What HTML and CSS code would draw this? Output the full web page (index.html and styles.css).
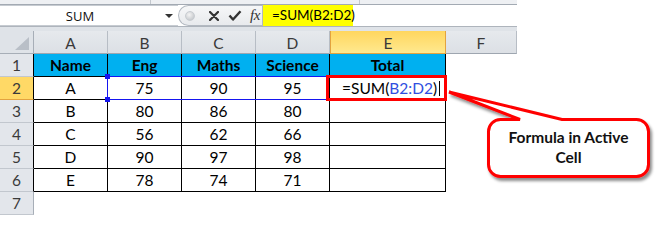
FILE: index.html
```html
<!DOCTYPE html>
<html>
<head>
<meta charset="utf-8">
<link rel="stylesheet" href="styles.css">
</head>
<body>
<div class="page">
  <div class="excel">
    <div class="topstrip"><div class="ts1"></div><div class="ts2"></div></div>
    <div class="fbar">
      <div class="namebox"><span class="nb-text">SUM</span><span class="nb-arrow"></span></div>
      <div class="tools">
        <span class="grip"></span>
        <svg class="ico-x" width="10" height="10" viewBox="0 0 10 10"><path d="M1 1 L9 9 M9 1 L1 9" stroke="#333" stroke-width="2.2" stroke-linecap="round"/></svg>
        <svg class="ico-ok" width="14" height="11" viewBox="0 0 14 11"><path d="M1.5 5.5 L5 9.5 L12.5 1.2" stroke="#333" stroke-width="2.4" fill="none" stroke-linejoin="round"/></svg>
        <span class="fx">fx</span>
      </div>
      <div class="finput"><span class="fhl">=SUM(B2:D2)</span></div>
    </div>
    <div class="gap"></div>
    <div class="sheet">
      <div class="corner"><svg width="14" height="13" viewBox="0 0 14 13"><path d="M0 13 L14 13 L14 0 Z" fill="#b9bfc7"/></svg></div>
      <div class="ch">A</div><div class="ch">B</div><div class="ch">C</div><div class="ch">D</div><div class="ch sel">E</div><div class="ch">F</div>

      <div class="rh dr">1</div>
      <div class="c hd">Name</div><div class="c hd">Eng</div><div class="c hd">Maths</div><div class="c hd">Science</div><div class="c hd">Total</div><div class="e"></div>

      <div class="rh dr sel">2</div>
      <div class="c">A</div><div class="c">75</div><div class="c">90</div><div class="c">95</div>
      <div class="c edit"><span>=SUM(</span><span class="ref">B2:D2</span><span>)</span><span class="caret"></span></div><div class="e"></div>

      <div class="rh dr">3</div>
      <div class="c">B</div><div class="c">80</div><div class="c">86</div><div class="c">80</div><div class="c"></div><div class="e"></div>

      <div class="rh dr">4</div>
      <div class="c">C</div><div class="c">56</div><div class="c">62</div><div class="c">66</div><div class="c"></div><div class="e"></div>

      <div class="rh dr">5</div>
      <div class="c">D</div><div class="c">90</div><div class="c">97</div><div class="c">98</div><div class="c"></div><div class="e"></div>

      <div class="rh dr">6</div>
      <div class="c">E</div><div class="c">78</div><div class="c">74</div><div class="c">71</div><div class="c"></div><div class="e"></div>

      <div class="rh">7</div>
      <div class="e"></div><div class="e"></div><div class="e"></div><div class="e"></div><div class="e"></div><div class="e"></div>

      <div class="selbox"></div>
      <div class="handle h1"></div>
      <div class="handle h2"></div>
      <div class="redbox"></div>
    </div>
  </div>

  <svg class="callout" width="658" height="215" viewBox="0 0 658 215">
    <defs>
      <filter id="sh" x="-10%" y="-10%" width="130%" height="140%">
        <feDropShadow dx="2" dy="3" stdDeviation="1.6" flood-color="#000" flood-opacity="0.45"/>
      </filter>
    </defs>
    <path d="M500.5 119.5 L520 119.5 L449 92 L562 119.5 L636.5 119.5 A12 12 0 0 1 648.5 131.5 L648.5 164.5 A12 12 0 0 1 636.5 176.5 L500.5 176.5 A12 12 0 0 1 488.5 164.5 L488.5 131.5 A12 12 0 0 1 500.5 119.5 Z" fill="#fff" stroke="#ff0000" stroke-width="3" stroke-linejoin="miter" filter="url(#sh)"/>
  </svg>
  <div class="callout-text">Formula in Active<br>Cell</div>
</div>
</body>
</html>
```
FILE: styles.css
```css
html, body {
  margin: 0;
  padding: 0;
  background: #fff;
}
.page {
  position: relative;
  width: 658px;
  height: 215px;
  overflow: hidden;
  font-family: Lato, "Noto Sans", sans-serif;
}
.excel {
  width: 517px;
}
.topstrip {
  height: 4px;
  background: #eef0f3;
  border-bottom: 1px solid #a3aab3;
  display: flex;
}
.ts1 {
  width: 150px;
  border-right: 1px solid #c3c8ce;
}
.ts2 {
  width: 208px;
  border-right: 1px solid #c3c8ce;
}
.fbar {
  height: 21px;
  display: flex;
  background: #fff;
  border-bottom: 1px solid #aeb4bc;
}
.namebox {
  width: 178px;
  box-sizing: border-box;
  border-top: 1px solid #c6cbd1;
  border-bottom: 1px solid #c6cbd1;
  display: flex;
  align-items: center;
  font-family: "Open Sans", sans-serif;
  font-size: 13px;
  color: #111;
}
.nb-text {
  width: 160px;
  text-align: center;
}
.nb-arrow {
  width: 0;
  height: 0;
  margin-left: 5px;
  border-left: 4px solid transparent;
  border-right: 4px solid transparent;
  border-top: 4px solid #333;
}
.tools {
  width: 84px;
  box-sizing: border-box;
  background: linear-gradient(#f6f7f8, #e8eaed);
  border: 1px solid #b3b9c1;
  border-right: none;
  border-radius: 11px 0 0 11px;
  display: flex;
  align-items: center;
}
.grip {
  width: 8px;
  height: 8px;
  border-radius: 50%;
  margin-left: 6px;
  background: radial-gradient(circle at 40% 35%, #f4f4f4, #b9bdc2);
  border: 1px solid #c8ccd1;
}
.ico-x {
  margin-left: 14px;
}
.ico-ok {
  margin-left: 9px;
}
.fx {
  margin-left: 8px;
  font-family: "Liberation Serif", serif;
  font-style: italic;
  font-size: 15px;
  color: #333;
  letter-spacing: -0.5px;
}
.finput {
  flex: 1;
  border-left: 1px solid #b3b9c1;
  display: flex;
  align-items: stretch;
}
.fhl {
  width: 90px;
  box-sizing: border-box;
  padding-left: 9px;
  background: #ffff00;
  font-size: 13.5px;
  line-height: 21px;
  color: #000;
}
.gap {
  height: 4px;
  background: #dfe3e8;
}
.sheet {
  position: relative;
  display: grid;
  grid-template-columns: 34px 74px 74px 74px 74px 116px 71px;
  grid-auto-rows: 23px;
  font-size: 15.5px;
}
.sheet > div {
  box-sizing: border-box;
}
.corner {
  background: #dfe3e8;
  border-right: 1px solid #a7aeb7;
  border-bottom: 1px solid #a7aeb7;
  display: flex;
  justify-content: flex-end;
  align-items: flex-end;
  padding: 0 4px 3px 0;
}
.ch {
  background: linear-gradient(#e6e9ed, #dce0e5);
  border-right: 1px solid #b7bdc5;
  border-bottom: 1px solid #9ea6b0;
  color: #3a3a3a;
  display: flex;
  align-items: center;
  justify-content: center;
  padding-top: 1px;
}
.ch.sel {
  background: linear-gradient(#ffd65e, #ffe98f);
  border-right: 1px solid #e3a33f;
  border-left: 1px solid #e3a33f;
  border-bottom: 1px solid #e3a33f;
}
.rh {
  background: #e3e6eb;
  border-right: 1px solid #a7aeb7;
  border-bottom: 1px solid #c2c7ce;
  color: #3a3a3a;
  display: flex;
  align-items: center;
  justify-content: center;
}
.rh.dr {
  border-right-color: #000;
}
.rh.sel {
  background: #ffd966;
  border-bottom-color: #e3a33f;
}
.c {
  border-right: 1px solid #000;
  border-bottom: 1px solid #000;
  display: flex;
  align-items: center;
  justify-content: center;
  color: #000;
}
.c.hd {
  background: #00b0f0;
  font-weight: 700;
}
.c.edit {
  justify-content: flex-start;
  padding-left: 12px;
  font-size: 15.5px;
}
.ref {
  color: #2f4ee0;
}
.caret {
  width: 1px;
  height: 15px;
  background: #000;
  margin-left: 2px;
}
.e {
  background: #fff;
}
.selbox {
  position: absolute;
  left: 107px;
  top: 45px;
  width: 222px;
  height: 24px;
  border: 1px solid #1515f0;
}
.handle {
  position: absolute;
  width: 5px;
  height: 5px;
  background: #1515f0;
}
.h1 {
  left: 105px;
  top: 43px;
}
.h2 {
  left: 105px;
  top: 66px;
}
.redbox {
  position: absolute;
  left: 326px;
  top: 44px;
  width: 121px;
  height: 26px;
  border: 3px solid #ff0000;
}
.callout {
  position: absolute;
  left: 0;
  top: 0;
  pointer-events: none;
}
.callout-text {
  position: absolute;
  left: 488px;
  top: 127px;
  width: 161px;
  text-align: center;
  font-weight: 700;
  font-size: 15.5px;
  line-height: 20px;
  color: #111;
}
```
